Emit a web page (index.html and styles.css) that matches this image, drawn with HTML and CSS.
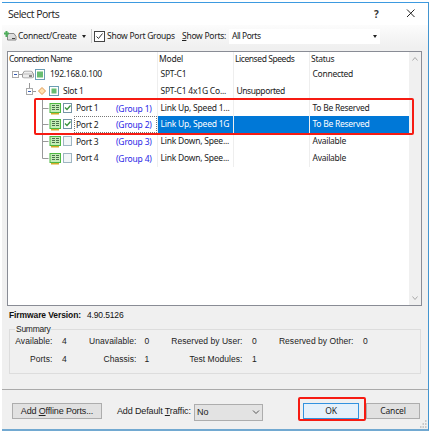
FILE: index.html
```
<!DOCTYPE html>
<html lang="en">
<head>
<meta charset="utf-8">
<title>Select Ports</title>
<link rel="stylesheet" href="styles.css">
</head>
<body>
<svg class="defs" width="0" height="0">
  <symbol id="card" viewBox="0 0 12 12"><path d="M2 10.500h8" stroke="#d4aa28" stroke-width="2"/><rect x="1" y=".5" width="10.500" height="9" fill="#c3edb6" stroke="#4db843"/><path d="M3 2.500h3M7 2.500h3M3 4.500h3M7 4.500h3M3 6.500h3M7 6.500h3" stroke="#4a704b" stroke-width="1"/></symbol>
  <symbol id="disk" viewBox="0 0 12 8"><path d="M2.500.5h7l2 3v3l-1 1h-9l-1-1v-3z" fill="#eee" stroke="#999"/><path d="M1 3.500h10" stroke="#bbb"/><path d="M7 5.500h3" stroke="#666" stroke-width="1.500"/></symbol>
</svg>
<main class="window">
  <header class="titlebar">
    <h1>Select Ports</h1>
    <svg class="winbtns" width="66" height="22"><text x="12" y="14.500">?</text><path d="M45 6.500l7.500 7.500M52.500 6.500l-7.500 7.500" stroke="#222" fill="none"/></svg>
  </header>
  <div class="toolbar">
    <svg class="connect-icon" width="13" height="12"><path d="M3.500 3.500h6.500l2 3v3.500h-8.500z" fill="#ddd" stroke="#888"/><path d="M8 8.500h3" stroke="#444"/><path d="M0 3.500h5M2.500 1v6" stroke="#4fae5c" stroke-width="2"/></svg>
    <span class="connect">Connect/Create</span><i class="caret"></i><i class="sep"></i>
    <svg class="bigcheck" width="11" height="11"><rect x=".5" y=".5" width="10" height="10" fill="#fff" stroke="#444"/><path d="M2.500 5.500l2 2 4-5" stroke="#333" fill="none"/></svg>
    <span class="groups">Show Port Groups</span>
    <span class="show"><u>S</u>how Ports:</span>
    <div class="portselect"><span>All Ports</span><i class="caret"></i></div>
  </div>
  <section class="tree">
    <div class="rows">
      <div class="row head"><span>Connection Name</span><span>Model</span><span>Licensed Speeds</span><span>Status</span></div>
      <div class="row">
        <div class="name"><svg width="42" height="17"><rect x="4.500" y="5.500" width="6" height="6" fill="#fff" stroke="#aaa"/><path d="M6 8.500h3" stroke="#345bb5"/><path d="M11 8.500h3" stroke="#999"/><use href="#disk" x="14" y="4.500" width="12" height="8"/><rect x="27.500" y="3.500" width="9" height="10" fill="#fff" stroke="#6d9db4"/><rect x="29" y="5.500" width="6" height="6" fill="#68bd71"/></svg><span class="ip">192.168.0.100</span></div>
        <span>SPT-C1</span><span></span><span>Connected</span>
      </div>
      <div class="row">
        <div class="name"><svg width="55" height="17"><path d="M21.500 0v5M24 8.500h4" stroke="#999"/><rect x="18.500" y="5.500" width="6" height="6" fill="#fff" stroke="#aaa"/><path d="M20 8.500h3" stroke="#345bb5"/><path d="M34 4.500l3.500 3.500-3.500 3.500-3.500-3.500z" fill="#ffe1b0" stroke="#df9a55"/><rect x="41.500" y="3.500" width="9" height="9" fill="#fff" stroke="#6d9db4"/><rect x="43.500" y="5.500" width="5" height="5" fill="#68bd71"/></svg><span class="slot">Slot 1</span></div>
        <span>SPT-C1 4x1G Co...</span><span>Unsupported</span><span></span>
      </div>
      <div class="row">
        <div class="name"><svg width="67" height="17"><path d="M34.500 0v17M34.500 8.500h6" stroke="#999"/><use href="#card" x="41" y="3" width="12" height="12"/><rect x="55.500" y="3.500" width="8" height="9" fill="#fff" stroke="#7594a5"/><path d="M57 7.500l2 2 3.500-4" stroke="#36913b" stroke-width="1.300" fill="none"/></svg><span class="port">Port 1</span><span class="group">(Group 1)</span></div>
        <span>Link Up, Speed 1...</span><span></span><span>To Be Reserved</span>
      </div>
      <div class="row selected">
        <div class="name"><svg width="67" height="17"><path d="M34.500 0v17M34.500 8.500h6" stroke="#999"/><use href="#card" x="41" y="3" width="12" height="12"/><rect x="55.500" y="3.500" width="8" height="9" fill="#fff" stroke="#7594a5"/><path d="M57 7.500l2 2 3.500-4" stroke="#36913b" stroke-width="1.300" fill="none"/></svg><span class="port">Port 2</span><span class="group">(Group 2)</span></div>
        <span>Link Up, Speed 1G</span><span></span><span>To Be Reserved</span>
      </div>
      <div class="row">
        <div class="name"><svg width="67" height="17"><path d="M34.500 0v17M34.500 8.500h6" stroke="#999"/><use href="#card" x="41" y="3" width="12" height="12"/><rect x="55.500" y="3.500" width="8" height="9" fill="#f2f6f8" stroke="#9eb5c2"/></svg><span class="port">Port 3</span><span class="group">(Group 3)</span></div>
        <span>Link Down, Spee...</span><span></span><span>Available</span>
      </div>
      <div class="row">
        <div class="name"><svg width="67" height="17"><path d="M34.500 0v8.500h6" stroke="#999" fill="none"/><use href="#card" x="41" y="3" width="12" height="12"/><rect x="55.500" y="3.500" width="8" height="9" fill="#f2f6f8" stroke="#9eb5c2"/></svg><span class="port">Port 4</span><span class="group">(Group 4)</span></div>
        <span>Link Down, Spee...</span><span></span><span>Available</span>
      </div>
    </div>
    <div class="scrollbar"><svg width="8" height="6"><path d="M1.500 4.500l2.500-3 2.500 3" fill="none" stroke="#aaa"/></svg><svg width="8" height="6"><path d="M1.500 1.500l2.500 3 2.500-3" fill="none" stroke="#aaa"/></svg></div>
    <div class="mark ports-mark"></div>
  </section>
  <div class="firmware"><b>Firmware Version:</b><span>4.90.5126</span></div>
  <fieldset class="summary">
    <legend>Summary</legend>
    <div class="stats">
      <span>Available:</span><span>4</span><span>Unavailable:</span><span>0</span><span>Reserved by User:</span><span>0</span><span>Reserved by Other:</span><span>0</span>
      <span>Ports:</span><span>4</span><span>Chassis:</span><span>1</span><span>Test Modules:</span><span>1</span>
    </div>
  </fieldset>
  <footer class="footer">
    <button class="offline">Add <u>O</u>ffline Ports...</button>
    <span class="traffic">Add Default <u>T</u>raffic:</span>
    <div class="combo"><span>No</span><svg width="8" height="6"><path d="M1 1.500l3 3 3-3" fill="none" stroke="#555"/></svg></div>
    <button class="ok">OK<i class="mark ok-mark"></i></button>
    <button class="cancel">Cancel</button>
    <svg class="grip" width="8" height="8"><path d="M6 1h1.500M3.500 4H5M6 4h1.500M1 7h1.500M3.500 7H5M6 7h1.500" stroke="#bbb" stroke-width="1.500"/></svg>
  </footer>
</main>
</body>
</html>
```
FILE: styles.css
```
* { box-sizing: border-box; }
body { margin: 0; width: 431px; height: 433px; overflow: hidden; background: #fff; color: #222; font: 8.5px/12px "Noto Sans", sans-serif; letter-spacing: -.27px; }
.defs { position: absolute; }
u { text-underline-offset: 1px; text-decoration-thickness: 1px; }
.window { width: 427px; height: 429px; margin: 2px 0 0 2px; background: #f0f0f0; border-top: 1px solid #3d9ae0; border-right: 1px solid #4395d0; border-bottom: 2px solid #72a9d1; display: flex; flex-direction: column; }
.titlebar { height: 22px; background: #fff; display: flex; justify-content: space-between; }
h1 { margin: 0 0 0 6px; font: 10.5px/22px "Open Sans", sans-serif; letter-spacing: -.5px; }
.winbtns { margin-right: -6px; width: 72px; }
.winbtns text { font: bold 10px "Open Sans", sans-serif; fill: #333; }
.toolbar { height: 22px; display: flex; align-items: center; padding-left: 2px; white-space: nowrap; background: linear-gradient(#fcfcfc, #f0f0f0); }
.connect-icon { flex: none; }
.connect { width: 64px; margin-left: 1px; }
.caret { width: 0; border: 2.5px solid transparent; border-top: 3px solid #222; border-bottom: 0; }
.sep { width: 1px; height: 14px; margin-left: 5px; background: #ccc; }
.bigcheck { margin-left: 2px; flex: none; }
.groups { width: 75px; margin-left: 2px; }
.show { width: 47px; letter-spacing: -.27px; }
.portselect { width: 151px; height: 15px; background: #fff; display: flex; align-items: center; justify-content: space-between; padding: 0 3px; letter-spacing: -.5px; }
.tree { width: 415px; height: 255px; margin: 4px 0 0 5px; border: 1px solid #898c95; background: #fff; display: flex; position: relative; }
.rows { width: 401px; }
.row { height: 16.8px; display: grid; grid-template-columns: 150px 76px 76px 99px; line-height: 16px; white-space: nowrap; }
.row > * { border-right: 1px solid #eee; padding-left: 2.5px; overflow: hidden; }
.row > :nth-child(2) { letter-spacing: -.22px; }
.row > :nth-child(3) { letter-spacing: -.43px; }
.row > :last-child { border-right: 0; }
.row > .name { padding-left: 0; }
.head { height: 14px; line-height: 13px; }
.head > span { padding-left: 1px; }
.head > :first-child { letter-spacing: -.6px; }
.name { display: flex; align-items: center; }
.name svg { flex: none; }
.port { width: 40px; margin-left: 1px; }
.group { color: #2928e6; letter-spacing: -.18px; padding-top: 1px; }
.selected { color: #fff; background: #0078d7; }
.selected .name { color: #222; background: #fff; position: relative; }
.selected .name::after { content: ""; position: absolute; left: 66px; right: 0; top: 0; bottom: 0; border: 1px dotted #777; }
.scrollbar { width: 12px; background: #f0f0f0; display: flex; flex-direction: column; align-items: center; justify-content: space-between; padding: 4px 0; }
.mark { position: absolute; border: 2px solid #f61b12; border-radius: 2px; }
.ports-mark { left: 26px; top: 46px; width: 380px; height: 37px; }
.firmware { display: flex; margin: 3px 0 0 7px; height: 12px; color: #111; font: 8.5px/12px "Liberation Sans", sans-serif; letter-spacing: 0; }
.firmware b { width: 78px; letter-spacing: -.1px; }
.firmware span { letter-spacing: -.15px; }
.summary { width: 412px; height: 51px; margin: 2px 0 0 7px; border: 1px solid #ddd; padding: 0; font: 8.5px/12px "Liberation Sans", sans-serif; letter-spacing: .05px; }
legend { margin-left: 5px; padding: 0 1px; height: 12px; letter-spacing: -.27px; }
.stats { display: grid; grid-template-columns: 42.5px 16px 68px 16px 90px 16px 95px 20px; row-gap: 6px; white-space: nowrap; }
.stats span:nth-child(odd) { text-align: right; }
.stats span:nth-child(even) { padding-left: 9.5px; }
.stats span:nth-child(4), .stats span:nth-child(12) { padding-left: 8px; }
.footer { position: relative; display: flex; align-items: center; border-top: 1px solid #aaa; height: 40px; margin-top: 15px; padding: 3px 0 0 10px; font: 9px/12px "Liberation Sans", sans-serif; letter-spacing: -.05px; }
button { height: 16px; padding: 0; border: 1px solid #adadad; background: #e1e1e1; color: #222; font: 9px/12px "Liberation Sans", sans-serif; letter-spacing: -.15px; white-space: nowrap; }
.offline { width: 90px; }
.traffic { width: 77px; margin-left: 15px; letter-spacing: -.13px; white-space: nowrap; }
.combo { width: 69px; height: 17px; margin-top: 2px; border: 1px solid #adadad; background: #e3e3e3; display: flex; align-items: center; justify-content: space-between; padding: 0 2px; }
.ok, .cancel { font: 8.5px/12px "Noto Sans", sans-serif; }
.ok { position: relative; width: 56px; margin-left: 40px; background: #e5f1fb; border: 1px solid #3292df; }
.ok-mark { left: -6px; top: -7px; width: 68px; height: 24px; }
.cancel { width: 54px; margin-left: 7px; }
.grip { position: absolute; right: 1px; bottom: 1px; }
```
